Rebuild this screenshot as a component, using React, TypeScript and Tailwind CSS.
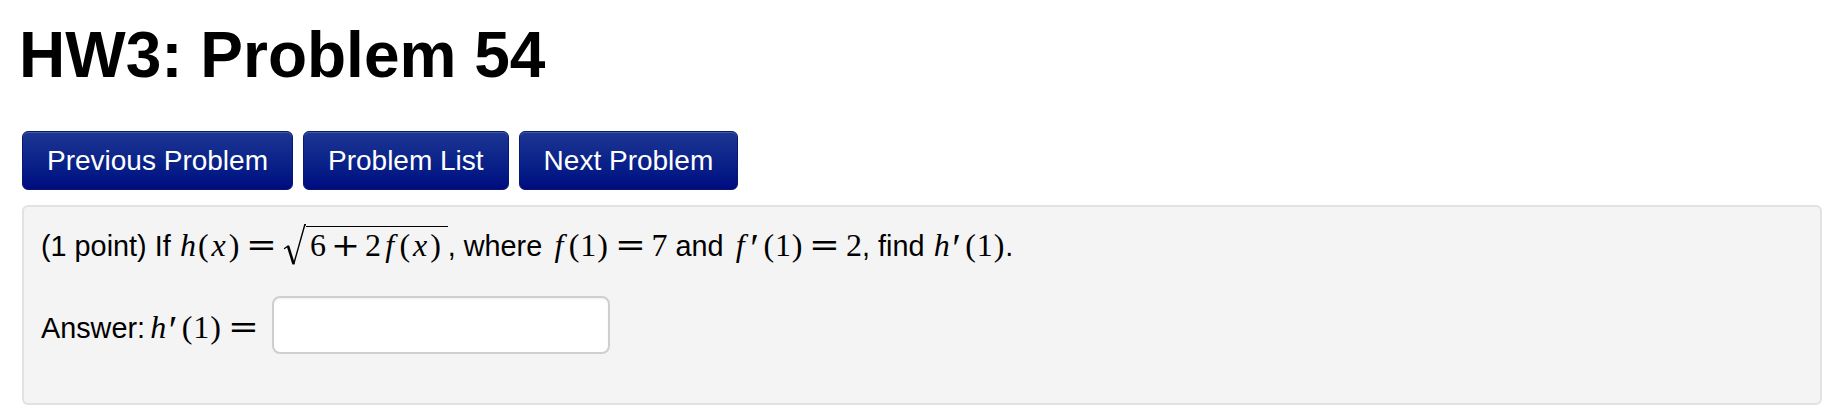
import type { ReactNode } from "react";

const sans = "font-['Liberation_Sans','Helvetica','Arial',sans-serif]";

// math glyph boxes sized to TeX advance widths (em of the 32px math font)
function H() {
  return <span className="inline-flex justify-center w-[0.576em] italic">h</span>;
}
function X() {
  return <span className="inline-flex justify-center w-[0.572em] italic">x</span>;
}
function F() {
  return <span className="inline-flex justify-center w-[0.55em] italic">f</span>;
}
function P({ c }: { c: string }) {
  return <span className="inline-flex justify-center w-[0.389em]">{c}</span>;
}
function D({ c }: { c: string }) {
  return <span className="inline-flex justify-center w-[0.5em]">{c}</span>;
}
function Eq() {
  return (
    <span className="inline-flex justify-center w-[0.778em] mx-[0.278em] font-['DejaVu_Serif',serif]">
      <span className="inline-block scale-x-[1.15]">=</span>
    </span>
  );
}
function Plus() {
  return (
    <span className="inline-flex justify-center w-[0.778em] mx-[0.222em] font-['DejaVu_Serif',serif]">
      <span className="inline-block scale-x-[1.08]">+</span>
    </span>
  );
}
function Prime() {
  return (
    <span className="inline-flex justify-start w-[0.42em] pl-[0.04em]">
      <span className="inline-block text-[1.25em] leading-none relative top-[0.12em] font-['Liberation_Serif',serif]">′</span>
    </span>
  );
}

function Math({ children, tight }: { children: ReactNode; tight?: boolean }) {
  return (
    <span
      className={
        tight
          ? "font-['Liberation_Serif','Times_New_Roman',serif] text-[32px] leading-none whitespace-nowrap -ml-[4px]"
          : "font-['Liberation_Serif','Times_New_Roman',serif] text-[32px] leading-none whitespace-nowrap"
      }
    >
      {children}
    </span>
  );
}

function Sqrt({ children }: { children: ReactNode }) {
  return (
    <span className="whitespace-nowrap">
      <svg width="23" height="42" viewBox="0 0 23 42" className="inline-block align-[-10px]">
        <path d="M1.5 24.5 L5 22" fill="none" stroke="#000" strokeWidth="1.3" strokeLinecap="round" />
        <path d="M5 22 L10.6 40" fill="none" stroke="#000" strokeWidth="2.6" />
        <path d="M10.6 40.5 L21.8 0.8 L23 0.8" fill="none" stroke="#000" strokeWidth="1.4" />
      </svg>
      <span className="inline-block border-t-[1.6px] border-black leading-[37px] pl-[4px] pr-[6px]">{children}</span>
    </span>
  );
}

function NavButton({ label }: { label: string }) {
  return (
    <button className="h-[59px] px-6 rounded-md border border-[#081a70] bg-linear-to-b from-[#1d3592] to-[#000a80] text-white text-[28px] leading-[32px] shadow-[inset_0_1px_0_rgba(255,255,255,0.18)]">
      {label}
    </button>
  );
}

export default function App() {
  return (
    <div className={`${sans} bg-white text-black pl-[22px] pr-[18px] pt-[19px] pb-4 min-h-[414px]`}>
      <h1 className="text-[64px] leading-[72px] font-bold -ml-[3px]">HW3: Problem 54</h1>

      <div className="mt-10 flex gap-[10px]">
        <NavButton label="Previous Problem" />
        <NavButton label="Problem List" />
        <NavButton label="Next Problem" />
      </div>

      <div className="mt-[15px] bg-[#f4f4f4] border-2 border-[#e2e2e2] rounded-md pl-[17px] pr-4 pt-[16px] pb-[49px]">
        <p className="text-[28.8px] leading-[44px] h-[44px] whitespace-nowrap">
          (1 point) If{" "}
          <Math>
            <H />
            <P c="(" />
            <X />
            <P c=")" />
            <Eq />
            <Sqrt>
              <D c="6" />
              <Plus />
              <D c="2" />
              <F />
              <P c="(" />
              <X />
              <P c=")" />
            </Sqrt>
          </Math>
          , where{" "}
          <Math>
            <F />
            <P c="(" />
            <D c="1" />
            <P c=")" />
            <Eq />
            <D c="7" />
          </Math>{" "}
          and{" "}
          <Math>
            <F />
            <Prime />
            <P c="(" />
            <D c="1" />
            <P c=")" />
            <Eq />
            <D c="2" />
          </Math>
          , find{" "}
          <Math>
            <H />
            <Prime />
            <P c="(" />
            <D c="1" />
            <P c=")" />
          </Math>
          .
        </p>

        <div className="mt-[29px] flex items-center text-[28.8px] leading-[32px]">
          <span className="whitespace-nowrap">
            Answer:{" "}
            <Math tight>
              <H />
              <Prime />
              <P c="(" />
              <D c="1" />
              <P c=")" />
              <Eq />
            </Math>
          </span>
          <input
            type="text"
            className="ml-[8px] w-[338px] h-[58px] bg-white border-2 border-[#cfcfcf] rounded-lg px-3 text-[24px] shadow-[inset_0_1px_2px_rgba(0,0,0,0.06)] outline-none"
          />
        </div>
      </div>
    </div>
  );
}
